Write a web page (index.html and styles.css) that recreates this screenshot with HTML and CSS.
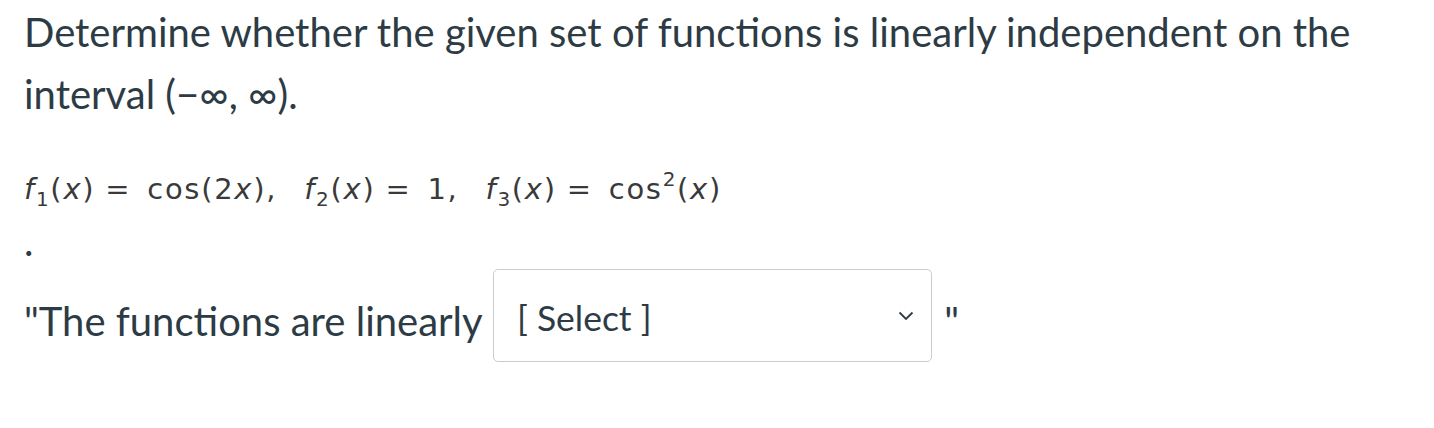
FILE: index.html
```html
<!DOCTYPE html>
<html>
<head>
<meta charset="utf-8">
<link rel="stylesheet" href="styles.css">
</head>
<body>
<div class="question">
  <p class="intro">Determine whether the given set of functions is linearly independent on the interval (−∞, ∞).</p>
  <p class="math"><span class="term"><i>f</i><sub>1</sub>(<i>x</i>)</span><span class="eq">=</span><span class="term">cos(2<i>x</i>),</span><span class="gap"></span><span class="term"><i>f</i><sub>2</sub>(<i>x</i>)</span><span class="eq">=</span><span class="term">1,</span><span class="gap"></span><span class="term"><i>f</i><sub>3</sub>(<i>x</i>)</span><span class="eq">=</span><span class="term">cos<sup>2</sup>(<i>x</i>)</span></p>
  <p class="dot">.</p>
  <p class="answer">"The functions are linearly <span class="select"><span class="select-label">[ Select ]</span><svg class="chev" width="16" height="10" viewBox="0 0 16 10"><path d="M1.5 1.5 L8 8 L14.5 1.5" fill="none" stroke="#2d3b45" stroke-width="1.8"/></svg></span> "</p>
</div>
</body>
</html>
```

FILE: styles.css
```css
html, body {
  margin: 0;
  padding: 0;
  background: #ffffff;
}
.question {
  padding: 0 24px;
  font-family: Lato, "Liberation Sans", sans-serif;
  font-size: 40px;
  color: #2d3b45;
  width: 1360px;
}
.intro {
  margin: 0;
  padding-top: 1px;
  line-height: 62px;
}
.math {
  margin: 46px 0 0 0;
  font-family: "DejaVu Sans", Verdana, sans-serif;
  font-size: 29px;
  color: #3a3a3a;
  line-height: 36px;
  letter-spacing: 1.7px;
  white-space: nowrap;
}
.math i {
  font-style: italic;
}
.math sub {
  font-size: 20px;
  vertical-align: -7px;
  line-height: 0;
}
.math sup {
  font-size: 20px;
  vertical-align: 13px;
  line-height: 0;
}
.eq {
  margin: 0 16px 0 10px;
}
.gap {
  display: inline-block;
  width: 27px;
}
.dot {
  margin: 16px 0 0 0;
  line-height: 36px;
}
.answer {
  margin: 10px 0 0 0;
  line-height: 92px;
  white-space: pre;
}
.select {
  display: inline-flex;
  align-items: center;
  justify-content: space-between;
  box-sizing: border-box;
  width: 439px;
  height: 93px;
  border: 1px solid #c7cdd1;
  border-radius: 5px;
  padding: 0 17px 0 23px;
  margin-left: 1px;
  margin-right: 2px;
  line-height: 1;
  vertical-align: 5px;
}
.select-label {
  font-size: 35.5px;
  margin-top: 4px;
}
.chev {
  display: block;
}
```
